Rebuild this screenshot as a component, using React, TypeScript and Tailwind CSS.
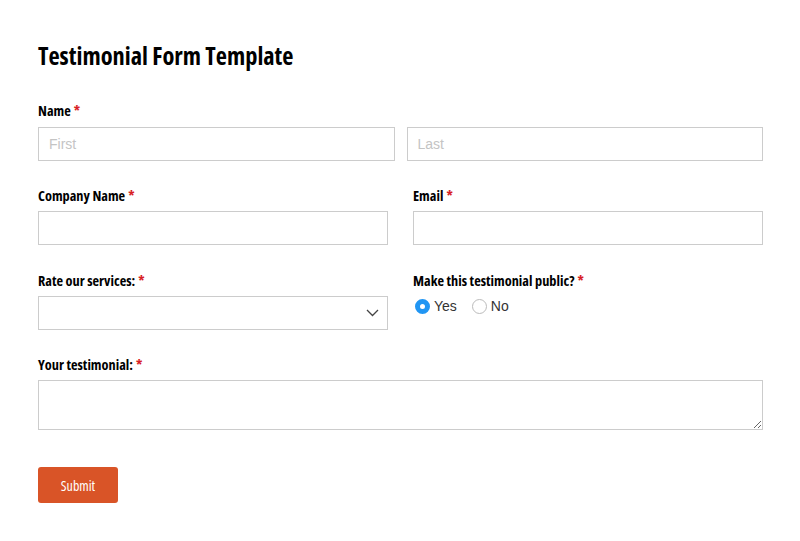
import React from 'react';

const label = "block text-[14.3px] font-bold text-black leading-[18px] [font-family:'Open_Sans',sans-serif] [font-stretch:75%]";
const input =
  "block w-full h-[34px] border border-[#cccccc] bg-white px-[10px] text-[14px] text-[#333] placeholder:text-[#c4c4c4] outline-none [font-family:'Liberation_Sans',Arial,sans-serif]";
const radio =
  "appearance-none w-[15px] h-[15px] m-0 rounded-full border border-[#bbbbbb] bg-white checked:border-[5px] checked:border-[#2196f3]";

function Req() {
  return <span className="text-[#d81f26] ml-[3px]">*</span>;
}

export default function App() {
  return (
    <div className="min-h-[541px] bg-white px-[38px] pt-[40px] [font-family:'Liberation_Sans',Arial,sans-serif]">
      <h1 className="text-[24.4px] font-bold leading-[32px] text-black [font-family:'Open_Sans',sans-serif] [font-stretch:75%]">
        Testimonial Form Template
      </h1>

      <form className="w-[725px] mt-[30px]" onSubmit={(e) => e.preventDefault()}>
        <div>
          <label className={label}>
            Name<Req />
          </label>
          <div className="grid grid-cols-2 gap-[12px] mt-[7px]">
            <input className={input} placeholder="First" />
            <input className={input} placeholder="Last" />
          </div>
        </div>

        <div className="grid grid-cols-2 gap-[25px] mt-[26px]">
          <div>
            <label className={label}>
              Company Name<Req />
            </label>
            <input className={`${input} mt-[6px]`} />
          </div>
          <div>
            <label className={label}>
              Email<Req />
            </label>
            <input className={`${input} mt-[6px]`} />
          </div>
        </div>

        <div className="grid grid-cols-2 gap-[25px] mt-[27px]">
          <div>
            <label className={label}>
              Rate our services:<Req />
            </label>
            <div className="relative mt-[6px]">
              <select className={`${input} appearance-none`} defaultValue="">
                <option value=""></option>
                <option>Excellent</option>
                <option>Good</option>
                <option>Average</option>
                <option>Poor</option>
              </select>
              <svg
                className="pointer-events-none absolute right-[9px] top-[13px]"
                width="13"
                height="8"
                viewBox="0 0 13 8"
                fill="none"
              >
                <path d="M1 1l5.5 5.5L12 1" stroke="#444" strokeWidth="1.3" />
              </svg>
            </div>
          </div>
          <div>
            <label className={label}>
              Make this testimonial public?<Req />
            </label>
            <div className="flex items-center mt-[6px] h-[20px] text-[14px] text-[#333]">
              <label className="flex items-center">
                <input type="radio" name="public" defaultChecked className={`${radio} ml-[2px]`} />
                <span className="ml-[4px]">Yes</span>
              </label>
              <label className="flex items-center ml-[15px]">
                <input type="radio" name="public" className={radio} />
                <span className="ml-[4px]">No</span>
              </label>
            </div>
          </div>
        </div>

        <div className="mt-[26px]">
          <label className={label}>
            Your testimonial:<Req />
          </label>
          <textarea className={`${input} h-[50px] mt-[6px] py-[6px]`} />
        </div>

        <button
          type="submit"
          className="mt-[37px] w-[80px] h-[36px] rounded-[3px] bg-[#d95427] text-white text-[14px] [font-family:'Open_Sans',sans-serif] [font-stretch:75%]"
        >
          Submit
        </button>
      </form>
    </div>
  );
}
